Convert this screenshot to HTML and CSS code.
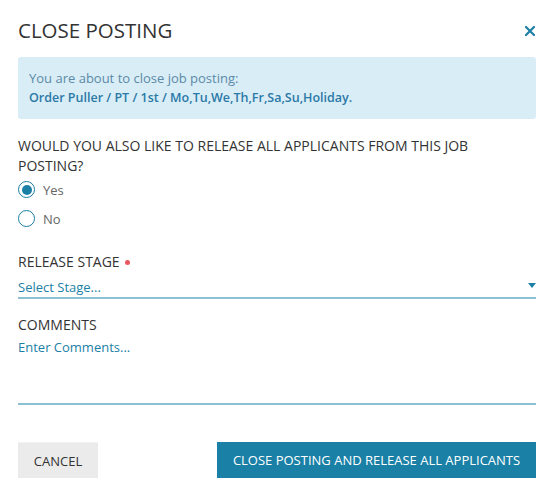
FILE: index.html
```html
<!DOCTYPE html>
<html>
<head>
<meta charset="utf-8">
<link rel="stylesheet" href="styles.css">
</head>
<body>
<div class="modal">
  <div class="header">
    <h1 class="title">CLOSE POSTING</h1>
    <span class="close">
      <svg width="10" height="10" viewBox="0 0 10 10"><path d="M1 1 L9 9 M9 1 L1 9" stroke="#1b7fa6" stroke-width="2.2" stroke-linecap="square"/></svg>
    </span>
  </div>
  <div class="alert">
    <div class="alert-line">You are about to close job posting:</div>
    <div class="alert-strong">Order Puller / PT / 1st / Mo,Tu,We,Th,Fr,Sa,Su,Holiday.</div>
  </div>
  <div class="question">WOULD YOU ALSO LIKE TO RELEASE ALL APPLICANTS FROM THIS JOB POSTING?</div>
  <div class="radios">
    <label class="radio"><span class="circle checked"></span><span class="rlabel">Yes</span></label>
    <label class="radio"><span class="circle"></span><span class="rlabel">No</span></label>
  </div>
  <div class="field-label stage-label">RELEASE STAGE <span class="req"></span></div>
  <div class="select">
    <span class="placeholder">Select Stage...</span>
    <svg class="caret" width="8" height="5" viewBox="0 0 8 5"><path d="M0 0 H8 L4 5 Z" fill="#1b7fa6"/></svg>
  </div>
  <div class="field-label comments-label">COMMENTS</div>
  <div class="textarea"><span class="placeholder">Enter Comments...</span></div>
  <div class="actions">
    <button class="btn btn-cancel">CANCEL</button>
    <button class="btn btn-primary">CLOSE POSTING AND RELEASE ALL APPLICANTS</button>
  </div>
</div>
</body>
</html>
```
FILE: styles.css
```css
* { box-sizing: border-box; }
html, body { margin: 0; padding: 0; background: #fff; }
body { font-family: "Open Sans", "Noto Sans", sans-serif; color: #333; }
.modal { width: 554px; padding: 0 18px; }
.header { display: flex; justify-content: space-between; align-items: center; height: 57px; padding-top: 3px; }
.title { margin: 0; font-size: 20.5px; font-weight: 400; color: #333; letter-spacing: 0; }
.close { display: flex; margin-right: 1px; margin-top: 1px; }
.alert { background: #d9edf7; border-radius: 3px; height: 62px; padding: 11px 12px 0 11px; font-size: 13px; line-height: 20px; }
.alert-line { color: #5b8aa6; }
.alert-strong { color: #2b79a6; font-weight: 600; font-size: 12.5px; }
.question { margin-top: 17px; font-size: 14px; line-height: 20px; color: #333; }
.radios { display: flex; flex-direction: column; gap: 12px; margin-top: 5px; }
.radio { display: flex; align-items: center; height: 17px; }
.circle { width: 17px; height: 17px; border-radius: 50%; border: 1.5px solid #1b7fa6; display: flex; align-items: center; justify-content: center; }
.circle.checked::after { content: ""; width: 10px; height: 10px; border-radius: 50%; background: #1b7fa6; }
.rlabel { margin-left: 8px; font-size: 13px; color: #666; }
.field-label { font-size: 14px; color: #333; line-height: 19px; }
.stage-label { margin-top: 25px; }
.req { display: inline-block; width: 5px; height: 5px; border-radius: 50%; background: #e8575f; vertical-align: middle; margin-left: 2px; margin-bottom: 2px; }
.select { display: flex; justify-content: space-between; align-items: center; margin-top: 5px; height: 23px; border-bottom: 2px solid #8cc1d3; padding-right: 0; }
.placeholder { font-size: 13px; color: #1b7fa6; }
.caret { margin-right: 0; margin-top: -2px; }
.comments-label { margin-top: 16px; }
.textarea { margin-top: 1px; height: 70px; border-bottom: 2px solid #8cc1d3; }
.actions { display: flex; justify-content: space-between; margin-top: 37px; }
.btn { border: 0; height: 36px; font-family: "Open Sans", "Noto Sans", sans-serif; font-size: 13px; cursor: pointer; padding: 0; }
.btn-cancel { width: 80px; background: #ebebeb; color: #333; border-top: 1px solid #f2f2f2; }
.btn-primary { width: 319px; background: #1a80a6; color: #fff; }
```
